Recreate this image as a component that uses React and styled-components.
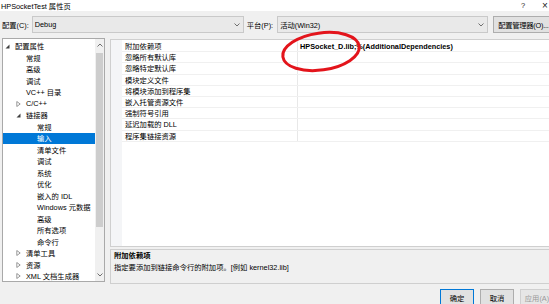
import React from 'react';
import styled, { createGlobalStyle } from 'styled-components';

const Global = createGlobalStyle`
  html, body { margin: 0; padding: 0; overflow: hidden; background: #f0f0f0; }
  body {
    font-family: "Liberation Sans", "Noto Sans CJK SC", sans-serif;
    font-size: 7.3px;
    color: #000;
  }
  * { box-sizing: border-box; }
`;

const Dialog = styled.div`
  position: relative;
  width: 562px;
  height: 304px;
  display: flex;
  flex-direction: column;
  background: #f0f0f0;
  overflow: hidden;
`;

const TitleBar = styled.div`
  height: 14px;
  display: flex;
  align-items: center;
  padding-left: 1px;
  padding-right: 6px;
  background: #fff;
  white-space: nowrap;
`;

const TitleText = styled.span`
  flex: 1;
`;

const TitleCtrl = styled.span`
  width: 22px;
  text-align: center;
  font-size: ${p => p.big ? 10 : 7.5}px;
  color: #222;
`;

const ConfigRow = styled.div`
  margin-top: 5px;
  height: 17px;
  display: flex;
  align-items: center;
  padding-left: 2px;
  white-space: nowrap;
`;

const Label = styled.span`
  margin-right: ${p => p.mr}px;
`;

const Combo = styled.div`
  width: ${p => p.w}px;
  height: 17px;
  margin-right: ${p => p.mr || 0}px;
  border: 1px solid #c9c9c9;
  background: #e9e9e9;
  display: flex;
  align-items: center;
  padding: 0 3px 0 2px;
`;

const ComboText = styled.span`
  flex: 1;
`;

const Btn = styled.div`
  width: ${p => p.w}px;
  height: ${p => p.h || 17}px;
  flex: none;
  display: flex;
  align-items: center;
  justify-content: ${p => p.left ? 'flex-start' : 'center'};
  padding-left: ${p => p.left ? 4 : 0}px;
  letter-spacing: ${p => p.left ? -0.25 : 0}px;
  background: ${p => p.disabled ? '#e6e6e6' : '#e1e1e1'};
  border: 1px solid ${p => p.primary ? '#0078d7' : p.disabled ? '#cfcfcf' : '#adadad'};
  color: ${p => p.disabled ? '#9a9a9a' : '#000'};
  white-space: nowrap;
`;

const Main = styled.div`
  margin-top: 5px;
  height: 246px;
  display: flex;
  gap: 5px;
  padding: 0 3px 0 2px;
`;

const Tree = styled.div`
  width: 103px;
  height: 244px;
  border: 1px solid #a9a9a9;
  background: #fff;
  display: flex;
`;

const TreeList = styled.div`
  flex: 1;
  padding-top: 1.5px;
  overflow: hidden;
`;

const TreeRow = styled.div`
  height: 11.5px;
  display: flex;
  align-items: center;
  padding-left: ${p => p.level * 11}px;
  background: ${p => p.selected ? '#0078d7' : 'transparent'};
  color: ${p => p.selected ? '#fff' : '#000'};
  white-space: nowrap;
`;

const Expander = styled.span`
  width: 12px;
  height: 11.5px;
  padding-left: 2px;
  flex: none;
  display: flex;
  align-items: center;
`;

const ScrollBar = styled.div`
  width: 9px;
  background: #f0f0f0;
  display: flex;
  flex-direction: column;
`;

const ScrollArrow = styled.div`
  height: 12px;
  display: flex;
  align-items: center;
  justify-content: center;
`;

const ScrollTrack = styled.div`
  flex: 1;
  padding: 2px 1px;
`;

const Thumb = styled.div`
  height: 174px;
  background: #cdcdcd;
`;

const RightCol = styled.div`
  flex: 1;
  display: flex;
  flex-direction: column;
  gap: 2px;
  padding-top: 1px;
`;

const Grid = styled.div`
  height: 208px;
  border: 1px solid #cfcfcf;
  background: #fff;
  display: flex;
`;

const GridMargin = styled.div`
  width: 11px;
  background: #f4f5f7;
`;

const GridRows = styled.div`
  flex: 1;
  padding-top: 1px;
`;

const GridRow = styled.div`
  height: 11.2px;
  display: grid;
  grid-template-columns: 175px 1fr;
  border-bottom: 1px solid #f0f0f0;
  white-space: nowrap;
`;

const NameCell = styled.div`
  padding-left: 3px;
  display: flex;
  align-items: center;
`;

const ValueCell = styled.div`
  padding-left: 2px;
  border-left: 1px solid #e8e8e8;
  display: flex;
  align-items: center;
  font-weight: ${p => p.bold ? 700 : 400};
`;

const Desc = styled.div`
  height: 35px;
  border: 1px solid #cfcfcf;
  background: #f0f0f0;
  padding: 1px 3px;
  white-space: nowrap;
`;

const DescTitle = styled.div`
  line-height: 9px;
  font-weight: 700;
`;

const DescText = styled.div`
  margin-top: 3px;
  line-height: 9px;
`;

const Footer = styled.div`
  margin-top: 5px;
  display: flex;
  justify-content: flex-end;
  gap: 6px;
  padding-right: 8px;
`;

const Annotation = styled.svg`
  position: absolute;
  left: 278px;
  top: 28px;
  pointer-events: none;
`;

const Chevron = () => (
  <svg width="6" height="4" viewBox="0 0 6 4">
    <path d="M0.5 0.5 L3 3 L5.5 0.5" fill="none" stroke="#606060" strokeWidth="0.9" />
  </svg>
);

const Tri = ({ open }) => open ? (
  <svg width="5" height="5" viewBox="0 0 5 5">
    <path d="M4.5 0.5 L4.5 4.5 L0.5 4.5 Z" fill="#404040" />
  </svg>
) : (
  <svg width="5" height="6" viewBox="0 0 5 6">
    <path d="M0.8 0.5 L4.2 3 L0.8 5.5 Z" fill="none" stroke="#808080" strokeWidth="0.8" />
  </svg>
);

const treeItems = [
  { l: 0, t: '配置属性', e: 'open' },
  { l: 1, t: '常规' },
  { l: 1, t: '高级' },
  { l: 1, t: '调试' },
  { l: 1, t: 'VC++ 目录' },
  { l: 1, t: 'C/C++', e: 'closed' },
  { l: 1, t: '链接器', e: 'open' },
  { l: 2, t: '常规' },
  { l: 2, t: '输入', sel: true },
  { l: 2, t: '清单文件' },
  { l: 2, t: '调试' },
  { l: 2, t: '系统' },
  { l: 2, t: '优化' },
  { l: 2, t: '嵌入的 IDL' },
  { l: 2, t: 'Windows 元数据' },
  { l: 2, t: '高级' },
  { l: 2, t: '所有选项' },
  { l: 2, t: '命令行' },
  { l: 1, t: '清单工具', e: 'closed' },
  { l: 1, t: '资源', e: 'closed' },
  { l: 1, t: 'XML 文档生成器', e: 'closed' },
];

const props = [
  ['附加依赖项', 'HPSocket_D.lib;%(AdditionalDependencies)'],
  ['忽略所有默认库', ''],
  ['忽略特定默认库', ''],
  ['模块定义文件', ''],
  ['将模块添加到程序集', ''],
  ['嵌入托管资源文件', ''],
  ['强制符号引用', ''],
  ['延迟加载的 DLL', ''],
  ['程序集链接资源', ''],
];

export default function App() {
  return (
    <>
      <Global />
      <Dialog>
        <TitleBar>
          <TitleText>HPSocketTest 属性页</TitleText>
          <TitleCtrl>?</TitleCtrl>
          <TitleCtrl big>×</TitleCtrl>
        </TitleBar>
        <ConfigRow>
          <Label mr={3}>配置(C):</Label>
          <Combo w={212} mr={3}><ComboText>Debug</ComboText><Chevron /></Combo>
          <Label mr={4}>平台(P):</Label>
          <Combo w={211} mr={5}><ComboText>活动(Win32)</ComboText><Chevron /></Combo>
          <Btn w={64} left>配置管理器(O)...</Btn>
        </ConfigRow>
        <Main>
          <Tree>
            <TreeList>
              {treeItems.map((it, i) => (
                <TreeRow key={i} level={it.l} selected={it.sel}>
                  <Expander>{it.e ? <Tri open={it.e === 'open'} /> : null}</Expander>
                  <span>{it.t}</span>
                </TreeRow>
              ))}
            </TreeList>
            <ScrollBar>
              <ScrollArrow>
                <svg width="6" height="4" viewBox="0 0 6 4"><path d="M0.5 3.5 L3 1 L5.5 3.5" fill="none" stroke="#606060" strokeWidth="0.9" /></svg>
              </ScrollArrow>
              <ScrollTrack><Thumb /></ScrollTrack>
              <ScrollArrow>
                <Chevron />
              </ScrollArrow>
            </ScrollBar>
          </Tree>
          <RightCol>
            <Grid>
              <GridMargin />
              <GridRows>
                {props.map(([n, v], i) => (
                  <GridRow key={i}>
                    <NameCell>{n}</NameCell>
                    <ValueCell bold={i === 0}>{v}</ValueCell>
                  </GridRow>
                ))}
              </GridRows>
            </Grid>
            <Desc>
              <DescTitle>附加依赖项</DescTitle>
              <DescText>指定要添加到链接命令行的附加项。[例如 kernel32.lib]</DescText>
            </Desc>
          </RightCol>
        </Main>
        <Footer>
          <Btn w={34} primary>确定</Btn>
          <Btn w={34}>取消</Btn>
          <Btn w={34} disabled>应用(A)</Btn>
        </Footer>
        <Annotation width="88" height="50" viewBox="0 0 88 50">
          <ellipse cx="43" cy="23.5" rx="38.5" ry="18.5" transform="rotate(-8 43 23.5)" fill="none" stroke="#e3141b" strokeWidth="3" />
        </Annotation>
      </Dialog>
    </>
  );
}
